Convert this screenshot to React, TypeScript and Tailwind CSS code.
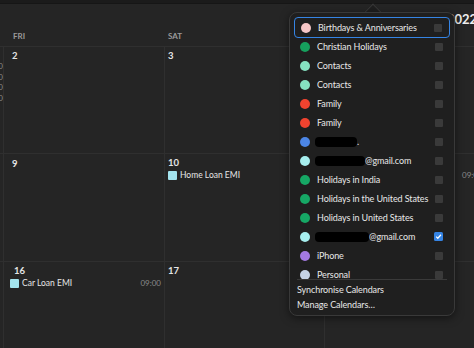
const font = "font-['Lato','Noto_Sans',sans-serif]";

type Cal = { name: string; color: string; checked?: boolean; redact?: number; suffix?: string };

const calendars: Cal[] = [
  { name: "Birthdays & Anniversaries", color: "#f7c6c6" },
  { name: "Christian Holidays", color: "#16a05d" },
  { name: "Contacts", color: "#86e1c1" },
  { name: "Contacts", color: "#86e1c1" },
  { name: "Family", color: "#f0432f" },
  { name: "Family", color: "#f0432f" },
  { name: "", color: "#4c86e6", redact: 42, suffix: "." },
  { name: "", color: "#a6eeee", redact: 50, suffix: "@gmail.com" },
  { name: "Holidays in India", color: "#16a765" },
  { name: "Holidays in the United States", color: "#16a765" },
  { name: "Holidays in United States", color: "#16a765" },
  { name: "", color: "#a6eeee", redact: 54, suffix: "@gmail.com", checked: true },
  { name: "iPhone", color: "#a47ae2" },
  { name: "Personal", color: "#c5d3e6" },
];

function Event({ title, time }: { title: string; time?: string }) {
  return (
    <div className="flex items-center h-[12px] text-[8.5px] text-[#e6e6e6]">
      <span className="w-[9px] h-[9px] rounded-[1px] bg-[#a4e4ee] mr-[3px] shrink-0" />
      <span className="flex-1 whitespace-nowrap">{title}</span>
      {time && <span className="text-[#8a8a8a] text-[8px] pr-[3px]">{time}</span>}
    </div>
  );
}

function Checkbox({ checked }: { checked?: boolean }) {
  if (checked) {
    return (
      <span className="w-[9px] h-[9px] rounded-[1.5px] bg-[#3584e4] flex items-center justify-center">
        <svg width="7" height="7" viewBox="0 0 8 8">
          <path d="M1.3 4.2 L3.2 6 L6.8 2" stroke="white" strokeWidth="1.4" fill="none" />
        </svg>
      </span>
    );
  }
  return <span className="w-[8px] h-[8px] rounded-[1px] bg-[#3a3a3a]" />;
}

export default function App() {
  return (
    <div className={`w-[474px] h-[348px] relative overflow-hidden bg-[#252525] ${font}`}>
      <div className="h-[4px] bg-[#1b1b1b] border-b border-[#161616]" />

      {/* header row */}
      <div className="grid grid-cols-[4px_161px_160px_1fr] h-[43px] border-b border-[#2f2f2f]">
        <div />
        <div className="flex items-end pl-[9px] pb-[4px] text-[8px] font-bold text-[#9a9a9a]">FRI</div>
        <div className="flex items-end pl-[3px] pb-[4px] text-[8px] font-bold text-[#9a9a9a]">SAT</div>
        <div className="relative">
          <span className="absolute left-[122px] top-[6px] text-[13px] font-bold text-[#eeeeee]">2022</span>
        </div>
      </div>

      {/* weeks */}
      <div className="grid grid-cols-[4px_161px_160px_1fr] grid-rows-[107px_108px_1fr] h-[301px]">
        {/* week 1 */}
        <div className="border-b border-[#2f2f2f] border-r overflow-hidden relative">
          <div className="absolute right-0 top-[14px] flex flex-col text-[8px] text-[#8a8a8a] leading-[10.5px]">
            <span>09:00</span>
            <span>09:00</span>
            <span>09:00</span>
            <span>09:00</span>
          </div>
        </div>
        <div className="border-b border-r border-[#2f2f2f] pl-[8px] pt-[2px]">
          <div className="text-[9.5px] font-bold text-[#e6e6e6]">2</div>
        </div>
        <div className="border-b border-r border-[#2f2f2f] pl-[3px] pt-[2px]">
          <div className="text-[9.5px] font-bold text-[#e6e6e6]">3</div>
        </div>
        <div className="border-b border-[#2f2f2f]" />

        {/* week 2 */}
        <div className="border-b border-r border-[#2f2f2f]" />
        <div className="border-b border-r border-[#2f2f2f] pl-[8px] pt-[3px]">
          <div className="text-[9.5px] font-bold text-[#e6e6e6]">9</div>
        </div>
        <div className="border-b border-r border-[#2f2f2f] pl-[3px] pt-[3px]">
          <div className="text-[9.5px] font-bold text-[#e6e6e6] leading-[12px]">10</div>
          <Event title="Home Loan EMI" />
        </div>
        <div className="border-b border-[#2f2f2f] relative">
          <span className="absolute left-[137px] top-[15px] text-[8px] text-[#8a8a8a]">09:00</span>
        </div>

        {/* week 3 */}
        <div className="border-r border-[#2f2f2f]" />
        <div className="border-r border-[#2f2f2f] pl-[6px] pt-[3px]">
          <div className="text-[9.5px] font-bold text-[#e6e6e6] leading-[12px] pl-[4px]">16</div>
          <Event title="Car Loan EMI" time="09:00" />
        </div>
        <div className="border-r border-[#2f2f2f] pl-[3px] pt-[3px]">
          <div className="text-[9.5px] font-bold text-[#e6e6e6] leading-[12px]">17</div>
        </div>
        <div />
      </div>

      {/* calendars popover */}
      <div className="absolute left-[289px] top-[12px] w-[166px] h-[304px]">
        <div className="absolute left-[78px] -top-[6px] w-[12px] h-[12px] rotate-45 bg-[#1f1f1f] border-l border-t border-[#393939]" />
        <div className="relative h-full rounded-[8px] bg-[#1f1f1f] border border-[#393939] shadow-[0_2px_8px_rgba(0,0,0,0.5)] flex flex-col">
          <div className="h-[266px] overflow-hidden pt-[5px] px-[4px]">
            {calendars.map((c, i) => (
              <div
                key={i}
                className={`flex items-center h-[19px] pl-[6px] pr-[7px] rounded-[4px] text-[9px] tracking-[-0.1px] text-[#e8e8e8] ${
                  i === 0 ? "border-[1.5px] border-[#3584e4] h-[21px] pl-[5px] pr-[6px] -mt-[1px] mb-[-1px]" : ""
                }`}
              >
                <span className="w-[10px] h-[10px] rounded-full shrink-0" style={{ backgroundColor: c.color }} />
                <span className="flex-1 flex items-center pl-[7px] whitespace-nowrap">
                  {c.redact && (
                    <span className="inline-block h-[10px] rounded-[4px] bg-black -ml-[2px]" style={{ width: c.redact }} />
                  )}
                  {c.suffix ?? c.name}
                </span>
                <Checkbox checked={c.checked} />
              </div>
            ))}
          </div>
          <div className="mx-[7px] border-t border-[#3a3a3a]" />
          <div className="px-[7px] pt-[2px] text-[9px] tracking-[-0.1px] text-[#e8e8e8] leading-[15px]">
            <div>Synchronise Calendars</div>
            <div>Manage Calendars…</div>
          </div>
        </div>
      </div>
    </div>
  );
}
